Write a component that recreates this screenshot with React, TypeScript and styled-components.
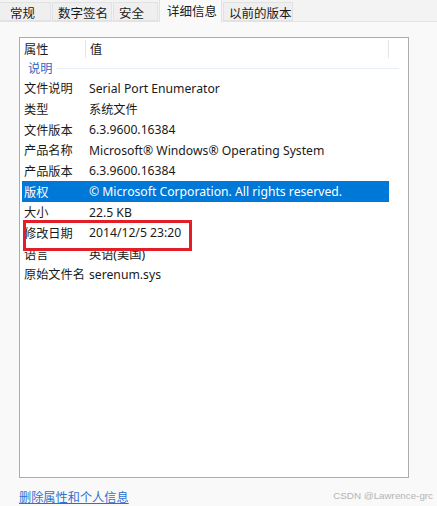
import React from "react";
import styled, { createGlobalStyle } from "styled-components";

const GlobalStyle = createGlobalStyle`
    html, body {
        margin: 0;
        padding: 0;
        background: #f9f9f9;
    }
    body {
        font-family: "Noto Sans", "Noto Sans CJK SC", sans-serif;
        font-size: 12.2px;
        color: #1a1a1a;
    }
`;

const Page = styled.div`
    position: relative;
    width: 437px;
    height: 506px;
    overflow: hidden;
    background: #f9f9f9;
`;

const TabStrip = styled.div`
    display: flex;
    align-items: flex-end;
    height: 22px;
    background: #f3f3f3;
    border-bottom: 1px solid #e3e3e3;
    box-sizing: border-box;
`;

const Tab = styled.div<{ $active?: boolean; $w: number; $first?: boolean }>`
    box-sizing: border-box;
    width: ${(p) => p.$w}px;
    height: ${(p) => (p.$active ? 23 : 19)}px;
    margin-right: 1px;
    margin-bottom: ${(p) => (p.$active ? -1 : 0)}px;
    padding-left: ${(p) => (p.$first ? 10 : p.$active ? 7 : 5)}px;
    padding-top: 1px;
    display: flex;
    align-items: center;
    background: ${(p) => (p.$active ? "#f9f9f9" : "#efefef")};
    border: 1px solid #e2e2e2;
    border-left: ${(p) => (p.$first ? "none" : "1px solid #e2e2e2")};
    border-bottom: ${(p) => (p.$active ? "none" : "1px solid #e2e2e2")};
    font-size: 12.5px;
    color: #1a1a1a;
    white-space: nowrap;
    padding-bottom: ${(p) => (p.$active ? 3 : 0)}px;
`;

const Panel = styled.div`
    padding: 15px 0 0 19px;
`;

const ListBox = styled.div`
    position: relative;
    box-sizing: border-box;
    width: 390px;
    height: 441px;
    background: #ffffff;
    border: 1px solid #acacac;
`;

const Header = styled.div`
    display: flex;
    height: 20px;
    align-items: stretch;
`;

const HeaderCell = styled.div<{ $w: number }>`
    box-sizing: border-box;
    width: ${(p) => p.$w}px;
    padding-left: 4px;
    display: flex;
    align-items: center;
    border-right: 1px solid #e5e5e5;
    margin-top: 2px;
`;

const GroupRow = styled.div`
    display: flex;
    align-items: center;
    height: 20px;
    padding-left: 8px;
    color: #2f66c6;
    gap: 4px;

    &::after {
        content: "";
        flex: 0 0 auto;
        width: 343px;
        height: 1px;
        background: #e4edf8;
    }
`;

const Row = styled.div<{ $selected?: boolean }>`
    display: flex;
    align-items: center;
    box-sizing: border-box;
    height: 20.67px;
    width: 367px;
    margin-left: 2px;
    padding-left: 2px;
    background: ${(p) => (p.$selected ? "#0078d7" : "transparent")};
    color: ${(p) => (p.$selected ? "#ffffff" : "#1a1a1a")};
    white-space: nowrap;
`;

const NameCell = styled.div`
    width: 65px;
    flex: 0 0 auto;
`;

const ValueCell = styled.div`
    flex: 1;
    overflow: hidden;
`;

const Highlight = styled.div`
    position: absolute;
    left: 3px;
    top: 182px;
    width: 169px;
    height: 31px;
    box-sizing: border-box;
    border: 3px solid #e31e26;
    pointer-events: none;
`;

const Footer = styled.div`
    padding: 12px 0 0 19px;
    line-height: 16px;
`;

const Link = styled.a`
    color: #2f6fd0;
    text-decoration: underline;
    font-size: 12.2px;
    cursor: pointer;
`;

const Watermark = styled.div`
    position: absolute;
    right: 4px;
    bottom: 5px;
    font-family: "Liberation Sans", Arial, sans-serif;
    font-size: 9.8px;
    color: #b4b4b4;
`;

const tabs = [
    { label: "常规", w: 51 },
    { label: "数字签名", w: 60 },
    { label: "安全", w: 45 },
    { label: "详细信息", w: 63, active: true },
    { label: "以前的版本", w: 70 },
];

const rows: { name: string; value: string; selected?: boolean }[] = [
    { name: "文件说明", value: "Serial Port Enumerator" },
    { name: "类型", value: "系统文件" },
    { name: "文件版本", value: "6.3.9600.16384" },
    { name: "产品名称", value: "Microsoft® Windows® Operating System" },
    { name: "产品版本", value: "6.3.9600.16384" },
    { name: "版权", value: "© Microsoft Corporation. All rights reserved.", selected: true },
    { name: "大小", value: "22.5 KB" },
    { name: "修改日期", value: "2014/12/5 23:20" },
    { name: "语言", value: "英语(美国)" },
    { name: "原始文件名", value: "serenum.sys" },
];

export default function App() {
    return (
        <Page>
            <GlobalStyle />
            <TabStrip>
                {tabs.map((t, i) => (
                    <Tab key={t.label} $w={t.w} $active={t.active} $first={i === 0}>
                        {t.label}
                    </Tab>
                ))}
            </TabStrip>
            <Panel>
                <ListBox>
                    <Header>
                        <HeaderCell $w={66}>属性</HeaderCell>
                        <HeaderCell $w={303}>值</HeaderCell>
                    </Header>
                    <GroupRow>说明</GroupRow>
                    {rows.map((r) => (
                        <Row key={r.name} $selected={r.selected}>
                            <NameCell>{r.name}</NameCell>
                            <ValueCell>{r.value}</ValueCell>
                        </Row>
                    ))}
                    <Highlight />
                </ListBox>
            </Panel>
            <Footer>
                <Link>删除属性和个人信息</Link>
            </Footer>
            <Watermark>CSDN @Lawrence-grc</Watermark>
        </Page>
    );
}
